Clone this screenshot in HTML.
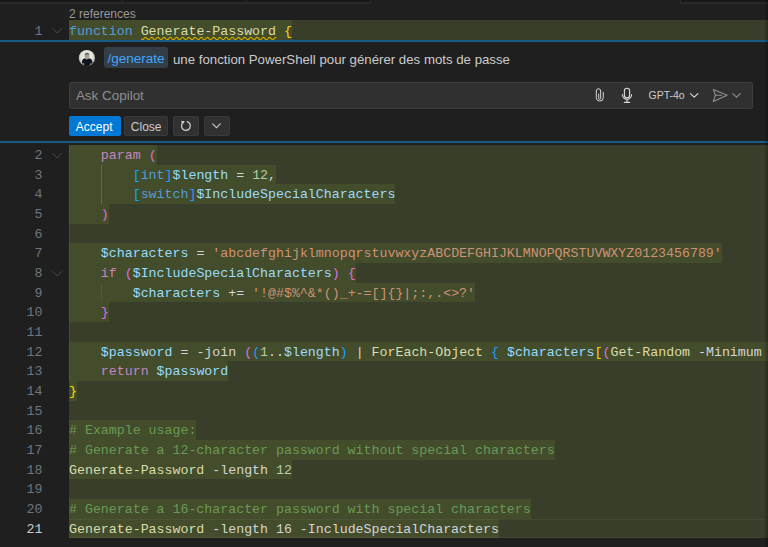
<!DOCTYPE html>
<html><head><meta charset="utf-8">
<style>
*{margin:0;padding:0;box-sizing:border-box}
html,body{width:768px;height:547px;overflow:hidden;background:#1f1f1f}
body{position:relative;font-family:"Liberation Sans",sans-serif}
.abs{position:absolute}
.lhl{position:absolute;left:69px;width:699px;height:19.67px;background:#393e2a}
.chl{position:absolute;left:69px;height:19.67px;background:#434d2b}
.ln{position:absolute;left:0;width:42.5px;text-align:right;font-family:"Liberation Mono",monospace;font-size:13.272px;line-height:19.67px;color:#6e7681;white-space:pre}
.ln.act{color:#cccccc}
.fold{position:absolute;left:51px}
.code{position:absolute;left:69px;width:695px;overflow:hidden;font-family:"Liberation Mono",monospace;font-size:13.272px;line-height:19.67px;white-space:pre}
.tabbox{position:absolute;top:0;height:4.3px;background:linear-gradient(#181818 0,#181818 2.3px,#2a2a2a 2.3px,#2a2a2a 4.3px)}
.tabbox::before,.tabbox::after{content:"";position:absolute;top:0;width:1px;height:2.3px;background:#2a2a2a}
.tabbox::before{left:0}.tabbox::after{right:0}
.blue{position:absolute;left:0;width:768px;height:2px;background:#175a86}
.btn{position:absolute;top:116.3px;height:19.3px;border-radius:2px;background:#313131;border:1px solid #3a3a3a;color:#cccccc;font-size:12px;line-height:20px;text-align:center}
</style></head><body>
<div class="tabbox" style="left:-1px;width:124px"></div>
<div class="tabbox" style="left:122px;width:125px"></div>
<div class="tabbox" style="left:246px;width:125px"></div>
<div class="tabbox" style="left:680px;width:90px"></div>

<div class="abs" style="left:69px;top:5.5px;font-size:12px;line-height:17px;color:#999999">2 references</div>

<div class="lhl" style="top:20.30px"></div>
<div class="chl" style="top:20.30px;width:222.96px"></div>
<div class="ln" style="top:21.80px">1</div>
<svg class="fold" style="top:26.30px" width="14" height="10" viewBox="0 0 14 10"><path d="M1.5 2.3 L6.2 7 L10.9 2.3" fill="none" stroke="#4a4a4a" stroke-width="1"/></svg>
<div class="code" style="top:21.80px"><span style="color:#569cd6">function</span><span style="color:#d4d4d4"> </span><span style="color:#dcdcaa">Generate-Password</span><span style="color:#d4d4d4"> </span><span style="color:#ffd700">{</span></div>
<div class="lhl" style="top:144.90px"></div>
<div class="chl" style="top:144.90px;width:87.59px"></div>
<div class="ln" style="top:145.90px">2</div>
<svg class="fold" style="top:150.90px" width="14" height="10" viewBox="0 0 14 10"><path d="M1.5 2.3 L6.2 7 L10.9 2.3" fill="none" stroke="#4a4a4a" stroke-width="1"/></svg>
<div class="code" style="top:145.90px"><span style="color:#d4d4d4">    </span><span style="color:#c586c0">param</span><span style="color:#d4d4d4"> </span><span style="color:#da70d6">(</span></div>
<div class="lhl" style="top:164.57px"></div>
<div class="chl" style="top:164.57px;width:207.04px"></div>
<div class="ln" style="top:165.57px">3</div>
<div class="code" style="top:165.57px"><span style="color:#d4d4d4">        </span><span style="color:#179fff">[</span><span style="color:#569cd6">int</span><span style="color:#179fff">]</span><span style="color:#9cdcfe">$length</span><span style="color:#d4d4d4"> = </span><span style="color:#b5cea8">12</span><span style="color:#d4d4d4">,</span></div>
<div class="lhl" style="top:184.24px"></div>
<div class="chl" style="top:184.24px;width:326.48px"></div>
<div class="ln" style="top:185.24px">4</div>
<div class="code" style="top:185.24px"><span style="color:#d4d4d4">        </span><span style="color:#179fff">[</span><span style="color:#569cd6">switch</span><span style="color:#179fff">]</span><span style="color:#9cdcfe">$IncludeSpecialCharacters</span></div>
<div class="lhl" style="top:203.91px"></div>
<div class="chl" style="top:203.91px;width:39.81px"></div>
<div class="ln" style="top:204.91px">5</div>
<div class="code" style="top:204.91px"><span style="color:#d4d4d4">    </span><span style="color:#da70d6">)</span></div>
<div class="lhl" style="top:223.58px"></div>
<div class="ln" style="top:224.58px">6</div>
<div class="lhl" style="top:243.25px"></div>
<div class="chl" style="top:243.25px;width:652.97px"></div>
<div class="ln" style="top:244.25px">7</div>
<div class="code" style="top:244.25px"><span style="color:#d4d4d4">    </span><span style="color:#9cdcfe">$characters</span><span style="color:#d4d4d4"> = </span><span style="color:#ce9178">'abcdefghijklmnopqrstuvwxyzABCDEFGHIJKLMNOPQRSTUVWXYZ0123456789'</span></div>
<div class="lhl" style="top:262.92px"></div>
<div class="chl" style="top:262.92px;width:286.67px"></div>
<div class="ln" style="top:263.92px">8</div>
<svg class="fold" style="top:268.92px" width="14" height="10" viewBox="0 0 14 10"><path d="M1.5 2.3 L6.2 7 L10.9 2.3" fill="none" stroke="#4a4a4a" stroke-width="1"/></svg>
<div class="code" style="top:263.92px"><span style="color:#d4d4d4">    </span><span style="color:#c586c0">if</span><span style="color:#d4d4d4"> </span><span style="color:#da70d6">(</span><span style="color:#9cdcfe">$IncludeSpecialCharacters</span><span style="color:#da70d6">)</span><span style="color:#d4d4d4"> </span><span style="color:#da70d6">{</span></div>
<div class="lhl" style="top:282.59px"></div>
<div class="chl" style="top:282.59px;width:406.11px"></div>
<div class="ln" style="top:283.59px">9</div>
<div class="code" style="top:283.59px"><span style="color:#d4d4d4">        </span><span style="color:#9cdcfe">$characters</span><span style="color:#d4d4d4"> += </span><span style="color:#ce9178">'!@#$%^&amp;*()_+-=[]{}|;:,.&lt;&gt;?'</span></div>
<div class="lhl" style="top:302.26px"></div>
<div class="chl" style="top:302.26px;width:39.81px"></div>
<div class="ln" style="top:303.26px">10</div>
<div class="code" style="top:303.26px"><span style="color:#d4d4d4">    </span><span style="color:#da70d6">}</span></div>
<div class="lhl" style="top:321.93px"></div>
<div class="ln" style="top:322.93px">11</div>
<div class="lhl" style="top:341.60px"></div>
<div class="chl" style="top:341.60px;width:699.00px"></div>
<div class="ln" style="top:342.60px">12</div>
<div class="code" style="top:342.60px"><span style="color:#d4d4d4">    </span><span style="color:#9cdcfe">$password</span><span style="color:#d4d4d4"> = -join </span><span style="color:#da70d6">(</span><span style="color:#179fff">(</span><span style="color:#b5cea8">1</span><span style="color:#d4d4d4">..</span><span style="color:#9cdcfe">$length</span><span style="color:#179fff">)</span><span style="color:#d4d4d4"> | </span><span style="color:#dcdcaa">ForEach-Object</span><span style="color:#d4d4d4"> </span><span style="color:#179fff">{</span><span style="color:#d4d4d4"> </span><span style="color:#9cdcfe">$characters</span><span style="color:#ffd700">[</span><span style="color:#da70d6">(</span><span style="color:#dcdcaa">Get-Random</span><span style="color:#d4d4d4"> -Minimum 0 -Maximum </span><span style="color:#9cdcfe">$characters</span><span style="color:#d4d4d4">.Length</span><span style="color:#da70d6">)</span><span style="color:#ffd700">]</span><span style="color:#d4d4d4"> </span><span style="color:#179fff">}</span><span style="color:#da70d6">)</span></div>
<div class="lhl" style="top:361.27px"></div>
<div class="chl" style="top:361.27px;width:159.26px"></div>
<div class="ln" style="top:362.27px">13</div>
<div class="code" style="top:362.27px"><span style="color:#d4d4d4">    </span><span style="color:#c586c0">return</span><span style="color:#d4d4d4"> </span><span style="color:#9cdcfe">$password</span></div>
<div class="lhl" style="top:380.94px"></div>
<div class="chl" style="top:380.94px;width:7.96px"></div>
<div class="ln" style="top:381.94px">14</div>
<div class="code" style="top:381.94px"><span style="color:#ffd700">}</span></div>
<div class="lhl" style="top:400.61px"></div>
<div class="ln" style="top:401.61px">15</div>
<div class="lhl" style="top:420.28px"></div>
<div class="chl" style="top:420.28px;width:127.41px"></div>
<div class="ln" style="top:421.28px">16</div>
<div class="code" style="top:421.28px"><span style="color:#6a9955"># Example usage:</span></div>
<div class="lhl" style="top:439.95px"></div>
<div class="chl" style="top:439.95px;width:485.74px"></div>
<div class="ln" style="top:440.95px">17</div>
<div class="code" style="top:440.95px"><span style="color:#6a9955"># Generate a 12-character password without special characters</span></div>
<div class="lhl" style="top:459.62px"></div>
<div class="chl" style="top:459.62px;width:222.96px"></div>
<div class="ln" style="top:460.62px">18</div>
<div class="code" style="top:460.62px"><span style="color:#dcdcaa">Generate-Password</span><span style="color:#d4d4d4"> -length </span><span style="color:#b5cea8">12</span></div>
<div class="lhl" style="top:479.29px"></div>
<div class="ln" style="top:480.29px">19</div>
<div class="lhl" style="top:498.96px"></div>
<div class="chl" style="top:498.96px;width:461.85px"></div>
<div class="ln" style="top:499.96px">20</div>
<div class="code" style="top:499.96px"><span style="color:#6a9955"># Generate a 16-character password with special characters</span></div>
<div class="lhl" style="top:518.63px"></div>
<div class="chl" style="top:518.63px;width:430.00px"></div>
<div class="ln act" style="top:519.63px">21</div>
<div class="code" style="top:519.63px"><span style="color:#dcdcaa">Generate-Password</span><span style="color:#d4d4d4"> -length 16 -IncludeSpecialCharacters</span></div>

<!-- indent guides -->
<div class="abs" style="left:69px;top:144.90px;width:1px;height:236.04px;background:rgba(255,255,255,0.07)"></div>
<div class="abs" style="left:101px;top:164.57px;width:1px;height:39.34px;background:rgba(255,255,255,0.16)"></div>
<div class="abs" style="left:101px;top:282.59px;width:1px;height:19.67px;background:rgba(255,255,255,0.07)"></div>
<!-- current line border -->
<div class="abs" style="left:69px;top:518.63px;width:695px;height:19.67px;border-top:1px solid rgba(255,255,255,0.05);border-bottom:1px solid rgba(255,255,255,0.05)"></div>

<!-- squiggle -->
<svg class="abs" style="left:140.67px;top:34px" width="136.37" height="8"><path d="M0.00 4.67 L0.25 4.93 L0.50 5.17 L0.75 5.37 L1.00 5.51 L1.25 5.59 L1.50 5.59 L1.75 5.53 L2.00 5.40 L2.25 5.21 L2.50 4.98 L2.75 4.72 L3.00 4.44 L3.25 4.17 L3.50 3.92 L3.75 3.70 L4.00 3.54 L4.25 3.43 L4.50 3.40 L4.75 3.44 L5.00 3.54 L5.25 3.71 L5.50 3.92 L5.76 4.18 L6.01 4.45 L6.26 4.73 L6.51 4.99 L6.76 5.22 L7.01 5.41 L7.26 5.53 L7.51 5.60 L7.76 5.59 L8.01 5.51 L8.26 5.36 L8.51 5.17 L8.76 4.93 L9.01 4.66 L9.26 4.38 L9.51 4.11 L9.76 3.86 L10.01 3.66 L10.26 3.51 L10.51 3.42 L10.76 3.40 L11.01 3.45 L11.26 3.57 L11.51 3.75 L11.76 3.98 L12.01 4.24 L12.26 4.51 L12.51 4.79 L12.76 5.04 L13.01 5.27 L13.26 5.44 L13.51 5.55 L13.76 5.60 L14.01 5.57 L14.26 5.48 L14.51 5.33 L14.76 5.12 L15.01 4.87 L15.26 4.60 L15.51 4.32 L15.76 4.05 L16.01 3.81 L16.26 3.62 L16.51 3.48 L16.76 3.41 L17.02 3.41 L17.27 3.47 L17.52 3.61 L17.77 3.80 L18.02 4.03 L18.27 4.30 L18.52 4.57 L18.77 4.85 L19.02 5.10 L19.27 5.31 L19.52 5.47 L19.77 5.57 L20.02 5.60 L20.27 5.56 L20.52 5.45 L20.77 5.28 L21.02 5.06 L21.27 4.81 L21.52 4.53 L21.77 4.26 L22.02 4.00 L22.27 3.77 L22.52 3.58 L22.77 3.46 L23.02 3.40 L23.27 3.42 L23.52 3.50 L23.77 3.64 L24.02 3.85 L24.27 4.09 L24.52 4.36 L24.77 4.64 L25.02 4.91 L25.27 5.15 L25.52 5.35 L25.77 5.50 L26.02 5.58 L26.27 5.60 L26.52 5.54 L26.77 5.42 L27.02 5.24 L27.27 5.01 L27.52 4.75 L27.77 4.47 L28.03 4.20 L28.28 3.94 L28.53 3.72 L28.78 3.55 L29.03 3.44 L29.28 3.40 L29.53 3.43 L29.78 3.53 L30.03 3.69 L30.28 3.90 L30.53 4.15 L30.78 4.42 L31.03 4.70 L31.28 4.96 L31.53 5.20 L31.78 5.39 L32.03 5.52 L32.28 5.59 L32.53 5.59 L32.78 5.52 L33.03 5.38 L33.28 5.19 L33.53 4.95 L33.78 4.69 L34.03 4.41 L34.28 4.14 L34.53 3.89 L34.78 3.68 L35.03 3.52 L35.28 3.43 L35.53 3.40 L35.78 3.44 L36.03 3.56 L36.28 3.73 L36.53 3.95 L36.78 4.21 L37.03 4.48 L37.28 4.76 L37.53 5.02 L37.78 5.24 L38.03 5.42 L38.28 5.54 L38.53 5.60 L38.78 5.58 L39.03 5.49 L39.29 5.35 L39.54 5.14 L39.79 4.90 L40.04 4.63 L40.29 4.35 L40.54 4.08 L40.79 3.84 L41.04 3.64 L41.29 3.49 L41.54 3.41 L41.79 3.40 L42.04 3.46 L42.29 3.59 L42.54 3.77 L42.79 4.00 L43.04 4.27 L43.29 4.54 L43.54 4.82 L43.79 5.07 L44.04 5.29 L44.29 5.46 L44.54 5.56 L44.79 5.60 L45.04 5.57 L45.29 5.47 L45.54 5.30 L45.79 5.09 L46.04 4.84 L46.29 4.57 L46.54 4.29 L46.79 4.02 L47.04 3.79 L47.29 3.60 L47.54 3.47 L47.79 3.41 L48.04 3.41 L48.29 3.49 L48.54 3.63 L48.79 3.82 L49.04 4.06 L49.29 4.33 L49.54 4.60 L49.79 4.88 L50.04 5.12 L50.29 5.33 L50.55 5.49 L50.80 5.58 L51.05 5.60 L51.30 5.55 L51.55 5.44 L51.80 5.26 L52.05 5.04 L52.30 4.78 L52.55 4.50 L52.80 4.23 L53.05 3.97 L53.30 3.74 L53.55 3.57 L53.80 3.45 L54.05 3.40 L54.30 3.42 L54.55 3.51 L54.80 3.66 L55.05 3.87 L55.30 4.12 L55.55 4.39 L55.80 4.67 L56.05 4.93 L56.30 5.17 L56.55 5.37 L56.80 5.51 L57.05 5.59 L57.30 5.59 L57.55 5.53 L57.80 5.40 L58.05 5.21 L58.30 4.98 L58.55 4.72 L58.80 4.44 L59.05 4.17 L59.30 3.92 L59.55 3.70 L59.80 3.54 L60.05 3.43 L60.30 3.40 L60.55 3.44 L60.80 3.54 L61.05 3.71 L61.30 3.92 L61.56 4.18 L61.81 4.45 L62.06 4.73 L62.31 4.99 L62.56 5.22 L62.81 5.41 L63.06 5.53 L63.31 5.60 L63.56 5.59 L63.81 5.51 L64.06 5.36 L64.31 5.17 L64.56 4.93 L64.81 4.66 L65.06 4.38 L65.31 4.11 L65.56 3.86 L65.81 3.66 L66.06 3.51 L66.31 3.42 L66.56 3.40 L66.81 3.45 L67.06 3.57 L67.31 3.75 L67.56 3.98 L67.81 4.24 L68.06 4.51 L68.31 4.79 L68.56 5.04 L68.81 5.27 L69.06 5.44 L69.31 5.55 L69.56 5.60 L69.81 5.57 L70.06 5.48 L70.31 5.33 L70.56 5.12 L70.81 4.87 L71.06 4.60 L71.31 4.32 L71.56 4.05 L71.81 3.81 L72.06 3.62 L72.31 3.48 L72.56 3.41 L72.82 3.41 L73.07 3.47 L73.32 3.61 L73.57 3.80 L73.82 4.03 L74.07 4.30 L74.32 4.57 L74.57 4.85 L74.82 5.10 L75.07 5.31 L75.32 5.47 L75.57 5.57 L75.82 5.60 L76.07 5.56 L76.32 5.45 L76.57 5.28 L76.82 5.06 L77.07 4.81 L77.32 4.53 L77.57 4.26 L77.82 4.00 L78.07 3.77 L78.32 3.58 L78.57 3.46 L78.82 3.40 L79.07 3.42 L79.32 3.50 L79.57 3.64 L79.82 3.85 L80.07 4.09 L80.32 4.36 L80.57 4.64 L80.82 4.91 L81.07 5.15 L81.32 5.35 L81.57 5.50 L81.82 5.58 L82.07 5.60 L82.32 5.54 L82.57 5.42 L82.82 5.24 L83.07 5.01 L83.32 4.75 L83.57 4.47 L83.82 4.20 L84.08 3.94 L84.33 3.72 L84.58 3.55 L84.83 3.44 L85.08 3.40 L85.33 3.43 L85.58 3.53 L85.83 3.69 L86.08 3.90 L86.33 4.15 L86.58 4.42 L86.83 4.70 L87.08 4.96 L87.33 5.20 L87.58 5.39 L87.83 5.52 L88.08 5.59 L88.33 5.59 L88.58 5.52 L88.83 5.38 L89.08 5.19 L89.33 4.95 L89.58 4.69 L89.83 4.41 L90.08 4.14 L90.33 3.89 L90.58 3.68 L90.83 3.52 L91.08 3.43 L91.33 3.40 L91.58 3.44 L91.83 3.56 L92.08 3.73 L92.33 3.95 L92.58 4.21 L92.83 4.48 L93.08 4.76 L93.33 5.02 L93.58 5.24 L93.83 5.42 L94.08 5.54 L94.33 5.60 L94.58 5.58 L94.83 5.49 L95.08 5.35 L95.34 5.14 L95.59 4.90 L95.84 4.63 L96.09 4.35 L96.34 4.08 L96.59 3.84 L96.84 3.64 L97.09 3.50 L97.34 3.41 L97.59 3.40 L97.84 3.46 L98.09 3.59 L98.34 3.77 L98.59 4.00 L98.84 4.27 L99.09 4.54 L99.34 4.82 L99.59 5.07 L99.84 5.29 L100.09 5.46 L100.34 5.56 L100.59 5.60 L100.84 5.57 L101.09 5.47 L101.34 5.30 L101.59 5.09 L101.84 4.84 L102.09 4.57 L102.34 4.29 L102.59 4.02 L102.84 3.79 L103.09 3.60 L103.34 3.47 L103.59 3.41 L103.84 3.41 L104.09 3.49 L104.34 3.63 L104.59 3.82 L104.84 4.06 L105.09 4.33 L105.34 4.60 L105.59 4.88 L105.84 5.12 L106.09 5.33 L106.35 5.49 L106.60 5.58 L106.85 5.60 L107.10 5.55 L107.35 5.44 L107.60 5.26 L107.85 5.04 L108.10 4.78 L108.35 4.50 L108.60 4.23 L108.85 3.97 L109.10 3.74 L109.35 3.57 L109.60 3.45 L109.85 3.40 L110.10 3.42 L110.35 3.51 L110.60 3.66 L110.85 3.87 L111.10 4.12 L111.35 4.39 L111.60 4.67 L111.85 4.93 L112.10 5.17 L112.35 5.37 L112.60 5.51 L112.85 5.59 L113.10 5.59 L113.35 5.53 L113.60 5.40 L113.85 5.22 L114.10 4.98 L114.35 4.72 L114.60 4.44 L114.85 4.17 L115.10 3.92 L115.35 3.70 L115.60 3.54 L115.85 3.43 L116.10 3.40 L116.35 3.44 L116.60 3.54 L116.85 3.71 L117.10 3.92 L117.35 4.18 L117.61 4.45 L117.86 4.73 L118.11 4.99 L118.36 5.22 L118.61 5.41 L118.86 5.53 L119.11 5.60 L119.36 5.59 L119.61 5.51 L119.86 5.36 L120.11 5.17 L120.36 4.93 L120.61 4.66 L120.86 4.38 L121.11 4.11 L121.36 3.86 L121.61 3.66 L121.86 3.51 L122.11 3.42 L122.36 3.40 L122.61 3.45 L122.86 3.57 L123.11 3.75 L123.36 3.98 L123.61 4.24 L123.86 4.51 L124.11 4.79 L124.36 5.04 L124.61 5.27 L124.86 5.44 L125.11 5.55 L125.36 5.60 L125.61 5.57 L125.86 5.48 L126.11 5.33 L126.36 5.12 L126.61 4.87 L126.86 4.60 L127.11 4.32 L127.36 4.05 L127.61 3.81 L127.86 3.62 L128.11 3.48 L128.36 3.41 L128.61 3.41 L128.87 3.47 L129.12 3.61 L129.37 3.80 L129.62 4.03 L129.87 4.30 L130.12 4.57 L130.37 4.85 L130.62 5.10 L130.87 5.31 L131.12 5.47 L131.37 5.57 L131.62 5.60 L131.87 5.56 L132.12 5.45 L132.37 5.28 L132.62 5.06 L132.87 4.81 L133.12 4.53 L133.37 4.26 L133.62 4.00 L133.87 3.77 L134.12 3.58 L134.37 3.46 L134.62 3.40 L134.87 3.42 L135.12 3.50 L135.37 3.64" fill="none" stroke="#cca700" stroke-width="1.2"/></svg>

<div class="blue" style="top:40px"></div>
<div class="blue" style="top:141px"></div>

<div class="abs" style="left:764px;top:0;width:4px;height:547px;background:linear-gradient(90deg,rgba(0,0,0,0),rgba(0,0,0,0.3))"></div>
<!-- chat widget -->
<svg class="abs" style="left:78px;top:49px" width="18" height="18" viewBox="0 0 18 18">
  <defs><radialGradient id="ag" cx="50%" cy="40%" r="55%"><stop offset="0" stop-color="#eef1ea"/><stop offset="0.7" stop-color="#dde2d8"/><stop offset="1" stop-color="#a9b0a4"/></radialGradient>
  <clipPath id="ac"><circle cx="8.85" cy="9.1" r="8.1"/></clipPath></defs>
  <circle cx="8.85" cy="9.1" r="8.1" fill="url(#ag)"/>
  <g clip-path="url(#ac)">
    <path d="M3.6 18 L4.2 11.5 Q4.6 9.4 7 9.2 L8.9 10.6 L10.8 9.2 Q13.6 9.4 14.2 11.8 L14.8 18 Z" fill="#10131e"/>
    <ellipse cx="9" cy="7" rx="2.4" ry="2.9" fill="#a69e97"/>
    <path d="M6.6 6.2 Q6.8 3.7 9 3.7 Q11.4 3.7 11.5 6.2 Q10.5 5.2 9 5.3 Q7.6 5.3 6.6 6.2 Z" fill="#55504b"/>
    <ellipse cx="5" cy="15" rx="1.3" ry="1" fill="#8a8f86"/>
    <ellipse cx="13" cy="15.2" rx="1.2" ry="0.9" fill="#8a8f86"/>
  </g>
</svg>
<div class="abs" style="left:104.4px;top:47.3px;width:63.7px;height:20.6px;border-radius:3px;background:#343e47"></div>
<div class="abs" style="left:107.5px;top:49.0px;font-size:13.5px;line-height:20px;color:#40a6ff">/generate</div>
<div class="abs" style="left:173px;top:49.7px;font-size:13.24px;line-height:20px;color:#cccccc">une fonction PowerShell pour générer des mots de passe</div>

<div class="abs" style="left:69px;top:82.2px;width:684px;height:26.4px;border-radius:2px;background:#303030;border:1px solid #3d3d3d"></div>
<div class="abs" style="left:75.9px;top:86.5px;font-size:13.45px;line-height:18px;color:#8f8f8f">Ask Copilot</div>

<svg class="abs" style="left:0;top:0" width="768" height="140">
  <g fill="none" stroke="#d8d8d8" stroke-width="1.15" stroke-linecap="round" stroke-linejoin="round">
    <!-- paperclip -->
    <path d="M603.3 92.3 V97.6 A3.5 3.5 0 0 1 596.3 97.6 V91 A2.2 2.2 0 0 1 600.7 91 V98.3 A1 1 0 0 1 598.7 98.3 V94.1" stroke-width="1"/>
    <!-- mic -->
    <rect x="624.4" y="88.2" width="5.2" height="9.6" rx="2.6"/>
    <path d="M622.4 94.6 A4.6 4.6 0 0 0 631.6 94.6"/>
    <path d="M627 99.2 V102"/>
    <path d="M624.3 102.3 H629.7"/>
    <!-- GPT chevron -->
    <path d="M690.5 93.6 L694.2 97.2 L697.9 93.6"/>
  </g>
  <g fill="none" stroke="#909090" stroke-width="1.1" stroke-linejoin="round" stroke-linecap="round">
    <path d="M713.4 89.4 L727.1 95.2 L713.4 101.4 L715.4 95.2 Z"/>
    <path d="M715.4 95.2 H721.6"/>
    <path d="M732.8 93.6 L736.5 97.2 L740.2 93.6"/>
  </g>
</svg>

<div class="abs" style="left:648.5px;top:87px;font-size:10.5px;line-height:16px;color:#cccccc">GPT-4o</div>

<div class="btn" style="left:69px;width:52px;background:#0078d4;border-color:#0078d4;color:#ffffff;padding-right:1.6px">Accept</div>
<div class="btn" style="left:124.4px;width:43.6px">Close</div>
<div class="btn" style="left:172.5px;width:26.5px"></div>
<div class="btn" style="left:203.8px;width:25.8px"></div>
<svg class="abs" style="left:0;top:110px" width="240" height="30">
  <g fill="none" stroke="#cccccc" stroke-width="1.1" stroke-linecap="round">
    <path d="M187.2 11.7 A4.4 4.4 0 1 1 183.4 12.3" stroke-width="1.3"/>
    <path d="M212.7 13.9 L216.5 17.7 L220.3 13.9"/>
  </g>
  <path d="M181 10.9 L184.8 11.1 L182.4 14.2 Z" fill="#cccccc"/>
</svg>
</body></html>
